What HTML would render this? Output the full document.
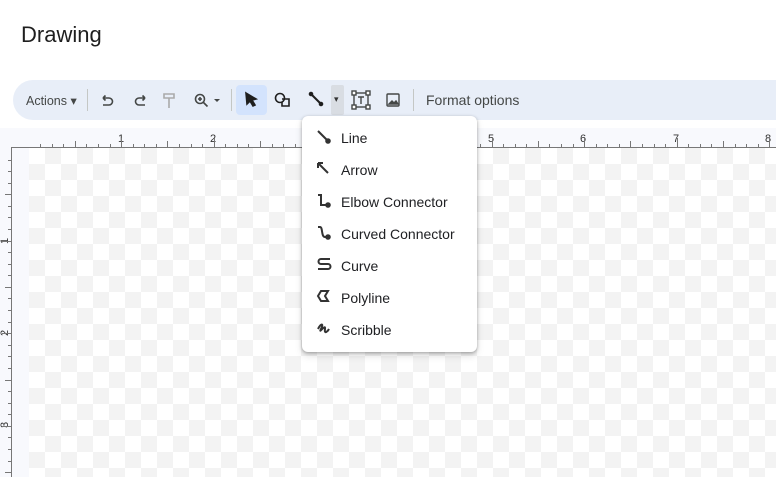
<!DOCTYPE html>
<html><head><meta charset="utf-8"><style>
body{margin:0;width:776px;height:477px;overflow:hidden;background:#fff;font-family:"Liberation Sans",Arial,sans-serif;position:relative}
.title{position:absolute;left:21px;top:22px;font-size:22px;color:#1f1f1f}
.tb{position:absolute;left:13px;top:80px;width:800px;height:40px;background:#e8eef8;border-radius:20px}
.area{position:absolute;left:0;top:128px;width:776px;height:349px;background:#f8f9fd}
.canvas{position:absolute;left:29px;top:148px;width:747px;height:329px;
background-color:#fff;background-image:conic-gradient(#f3f3f3 25%,#fff 0 50%,#f3f3f3 0 75%,#fff 0);background-size:32px 32px}
.menu{position:absolute;left:302px;top:116px;width:175px;height:236px;background:#fff;border-radius:6px;box-shadow:0 1px 3px rgba(0,0,0,.3),0 4px 8px rgba(0,0,0,.12)}
.it{position:absolute;left:39px;font-size:14px;color:#202124}
.ic{position:absolute;left:14px}
.t{position:absolute;font-size:14px;color:#444746}
</style></head><body>
<div class="title">Drawing</div>
<div class="area"></div>
<div class="canvas"></div>
<svg style="position:absolute;left:0;top:128px" width="776" height="349">
<g stroke="#777" stroke-width="1" fill="none">
<path d="M11 19.5H776M11.5 19.5V349"/>
</g>
<g font-size="11" fill="#333" font-family="Liberation Sans">
<text x="118" y="14">1</text><text x="210" y="14">2</text><text x="488" y="14">5</text><text x="580" y="14">6</text><text x="673" y="14">7</text><text x="765" y="14">8</text>
<text transform="translate(8,116) rotate(-90)">1</text><text transform="translate(8,208) rotate(-90)">2</text><text transform="translate(8,300) rotate(-90)">3</text>
</g>
<g id="ticks" stroke="#777"></g>
</svg>
<script>
var g=document.getElementById('ticks'),s='';
for(var i=1;i<70;i++){var x=28.5+i*92.6/8;if(x>776)break;var h=i%8==0?10:(i%4==0?7:4);x=Math.round(x)+.5;s+='<line x1="'+x+'" x2="'+x+'" y1="'+(20-h)+'" y2="20"/>';}
for(var i=1;i<40;i++){var y=20+i*92.6/8;if(y>349)break;var h=i%8==0?10:(i%4==0?7:4);y=Math.round(y)+.5;s+='<line y1="'+y+'" y2="'+y+'" x1="'+(12-h)+'" x2="12"/>';}
g.innerHTML=s;
</script>
<div class="tb"></div>
<div class="t" style="left:26px;top:93px;font-size:12.5px">Actions ▾</div>
<div style="position:absolute;left:87px;top:89px;width:1px;height:22px;background:#c4c7c5"></div>
<svg style="position:absolute;left:95px;top:88px" width="440" height="26" fill="none" stroke="#444746" stroke-width="1.6">
<path d="M8 10h6a3.5 3.5 0 0 1 0 7H8M8 10l2.5-2.5M8 10l2.5 2.5"/>
<path d="M50 10h-6a3.5 3.5 0 0 0 0 7h6M50 10l-2.5-2.5M50 10l-2.5 2.5"/>
<path d="M69 6h10v4H69zM74 10v3M74 13v7" stroke="#aaa"/>
<circle cx="105" cy="11" r="4.5"/><path d="M108.5 14.5l4 4M103 11h4M105 9v4"/>
<path d="M119 11l3 3 3-3z" fill="#444746" stroke="none"/>
</svg>
<div style="position:absolute;left:231px;top:89px;width:1px;height:22px;background:#c4c7c5"></div>
<div style="position:absolute;left:236px;top:85px;width:31px;height:30px;background:#d3e3fd;border-radius:4px"></div>
<svg style="position:absolute;left:236px;top:85px" width="180" height="30" fill="none" stroke="#1f1f1f" stroke-width="1.6">
<path d="M10 8l10 6-4 1 3 5-2 1-3-5-3 3z" fill="#1f1f1f"/>
<circle cx="44" cy="13" r="4.5"/><path d="M46 14h7v7h-7v-4"/>
<path d="M75 9l10 10" stroke-width="2"/><circle cx="75" cy="9" r="1.5" fill="#1f1f1f"/><circle cx="85" cy="19" r="1.5" fill="#1f1f1f"/>
</svg>
<div style="position:absolute;left:331px;top:85px;width:13px;height:30px;background:#d9dde3;border-radius:2px"></div>
<div style="position:absolute;left:334px;top:94px;font-size:9px;color:#333">▾</div>
<svg style="position:absolute;left:350px;top:89px" width="60" height="22" fill="none" stroke="#444746" stroke-width="1.4">
<rect x="4" y="4" width="14" height="14"/><rect x="2" y="2" width="4" height="4" fill="#fff"/><rect x="16" y="2" width="4" height="4" fill="#fff"/><rect x="2" y="16" width="4" height="4" fill="#fff"/><rect x="16" y="16" width="4" height="4" fill="#fff"/>
<path d="M8 8h6M11 8v7"/>
<rect x="37" y="5" width="12" height="12" rx="1"/><path d="M39 15l3-3 2 2 2-2 2 3z" fill="#444746"/>
</svg>
<div style="position:absolute;left:413px;top:89px;width:1px;height:22px;background:#c4c7c5"></div>
<div class="t" style="left:426px;top:92px">Format options</div>
<div class="menu">
<svg class="ic" style="top:12px" width="20" height="220" fill="none" stroke="#333" stroke-width="2">
<path d="M2 3l10 10"/><circle cx="12" cy="13" r="1.8" fill="#333"/>
<path d="M2 35l10 10M2 35h5M2 35v5"/>
<path d="M2 67h3v10h7"/><circle cx="12" cy="77" r="1.8" fill="#333"/>
<path d="M2 99h2c3 0 1 10 5 10h3"/><circle cx="12" cy="109" r="1.8" fill="#333"/>
<path d="M14 131H5a2.5 2.5 0 0 0 0 5h7a2.5 2.5 0 0 1 0 5H2"/>
<path d="M12 163H5l-3 5 3 5h7l-3-5z"/>
<path d="M2 201c3-6 6-6 3 0s5-6 4 0 3 2 4 0"/>
</svg>
<div class="it" style="top:14px">Line</div>
<div class="it" style="top:46px">Arrow</div>
<div class="it" style="top:78px">Elbow Connector</div>
<div class="it" style="top:110px">Curved Connector</div>
<div class="it" style="top:142px">Curve</div>
<div class="it" style="top:174px">Polyline</div>
<div class="it" style="top:206px">Scribble</div>
</div>
</body></html>
